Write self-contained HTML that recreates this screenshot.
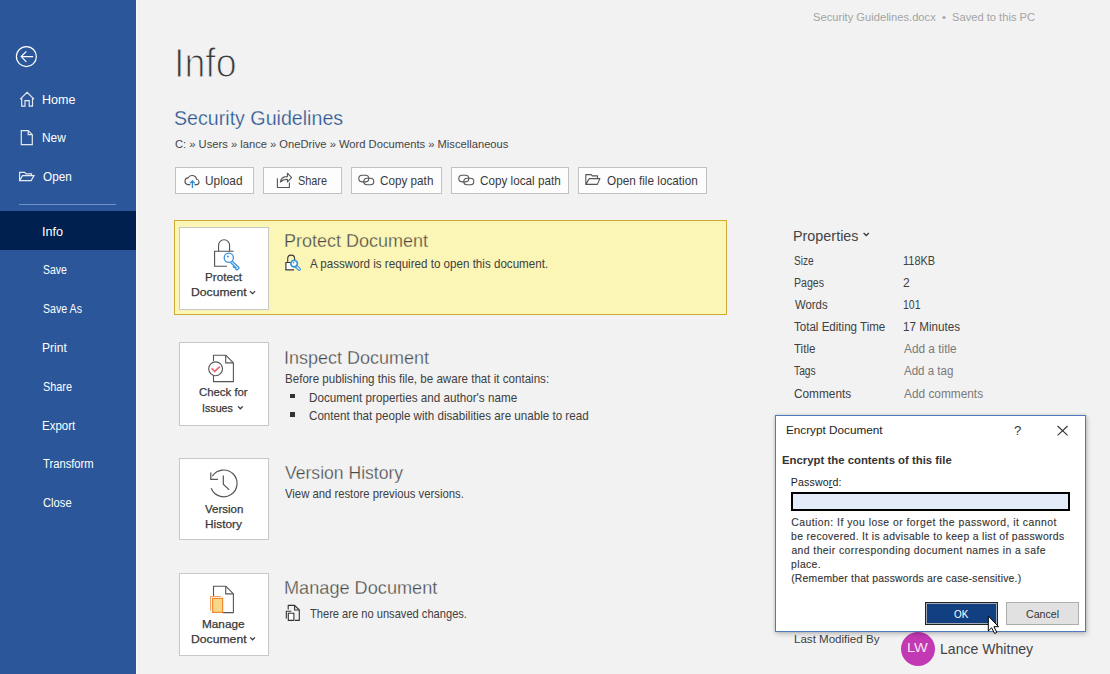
<!DOCTYPE html>
<html><head><meta charset="utf-8"><style>
html,body{margin:0;padding:0}
body{width:1110px;height:674px;position:relative;overflow:hidden;background:#f2f2f2;font-family:"Liberation Sans",sans-serif}
.t{position:absolute;line-height:1;white-space:nowrap;transform-origin:0 0}
</style></head><body>
<div style="position:absolute;left:0px;top:0px;width:136px;height:674px;box-sizing:border-box;background:#2b579a"></div>
<div style="position:absolute;left:136px;top:0px;width:1px;height:674px;box-sizing:border-box;background:#f8f8f8"></div>
<div style="position:absolute;left:0px;top:211px;width:136px;height:39px;box-sizing:border-box;background:#00204f"></div>
<div style="position:absolute;left:19px;top:203.5px;width:97px;height:1px;box-sizing:border-box;background:#6f93c9"></div>
<div class="t" style="top:93.84px;font-size:12px;color:#ffffff;left:42.20px;transform:scaleX(1.0433);">Home</div>
<div class="t" style="top:132.04px;font-size:12px;color:#ffffff;left:42.25px;transform:scaleX(0.9913);">New</div>
<div class="t" style="top:170.84px;font-size:12px;color:#ffffff;left:42.67px;transform:scaleX(0.9779);">Open</div>
<div class="t" style="top:225.84px;font-size:12px;color:#ffffff;left:42.06px;transform:scaleX(1.0532);">Info</div>
<div class="t" style="top:264.24px;font-size:12px;color:#ffffff;left:42.73px;transform:scaleX(0.8752);">Save</div>
<div class="t" style="top:303.44px;font-size:12px;color:#ffffff;left:42.72px;transform:scaleX(0.8844);">Save As</div>
<div class="t" style="top:342.24px;font-size:12px;color:#ffffff;left:42.24px;transform:scaleX(1.0025);">Print</div>
<div class="t" style="top:380.94px;font-size:12px;color:#ffffff;left:42.71px;transform:scaleX(0.9061);">Share</div>
<div class="t" style="top:420.04px;font-size:12px;color:#ffffff;left:42.28px;transform:scaleX(0.9583);">Export</div>
<div class="t" style="top:458.44px;font-size:12px;color:#ffffff;left:42.98px;transform:scaleX(0.9339);">Transform</div>
<div class="t" style="top:497.34px;font-size:12px;color:#ffffff;left:42.64px;transform:scaleX(0.9350);">Close</div>
<svg style="position:absolute;left:0;top:0" width="136" height="200" viewBox="0 0 136 200" fill="none" stroke="#fff" stroke-width="1.2">
<circle cx="26.4" cy="56.6" r="10"/>
<path d="M21.4 56.6 H33.2 M26.4 51.4 L21.2 56.6 L26.4 61.8"/>
<path d="M20.2 99.2 L27.1 92.3 L34 99.2 M21.7 97.8 V106.2 H25 V100.6 H29.2 V106.2 H32.5 V97.8" stroke="#e6e9f0" />
<path d="M21.3 130.6 H28.2 L32.3 134.7 V144.6 H21.3 Z M28.2 130.6 V134.7 H32.3" stroke="#e6e9f0"/>
<path d="M19.6 180.6 V172.3 H24.6 L26 173.8 H31.5 V175.6 M19.6 180.6 L22.5 175.6 H34 L31.1 180.6 Z" stroke="#e6e9f0"/>
</svg>
<div class="t" style="top:42.99px;font-size:41px;color:#3a3a3a;left:173.72px;transform:scaleX(0.9168);-webkit-text-stroke:1.2px #f2f2f2;">Info</div>
<div class="t" style="top:108.74px;font-size:19.8px;color:#2a5590;left:174.42px;transform:scaleX(0.9923);-webkit-text-stroke:0.25px #f2f2f2;">Security Guidelines</div>
<div class="t" style="top:137.80px;font-size:11.7px;color:#444;left:174.64px;transform:scaleX(0.9563);">C: » Users » lance » OneDrive » Word Documents » Miscellaneous</div>
<div style="position:absolute;left:175px;top:167px;width:79px;height:27px;box-sizing:border-box;border:1px solid #c2c2c2;background:#fdfdfd"></div>
<div class="t" style="top:176.03px;font-size:11.9px;color:#3a3a3a;left:205.21px;transform:scaleX(0.9956);">Upload</div>
<div style="position:absolute;left:263px;top:167px;width:79px;height:27px;box-sizing:border-box;border:1px solid #c2c2c2;background:#fdfdfd"></div>
<div class="t" style="top:176.03px;font-size:11.9px;color:#3a3a3a;left:298.41px;transform:scaleX(0.9138);">Share</div>
<div style="position:absolute;left:351px;top:167px;width:91px;height:27px;box-sizing:border-box;border:1px solid #c2c2c2;background:#fdfdfd"></div>
<div class="t" style="top:176.03px;font-size:11.9px;color:#3a3a3a;left:380.41px;transform:scaleX(0.9850);">Copy path</div>
<div style="position:absolute;left:451px;top:167px;width:118px;height:27px;box-sizing:border-box;border:1px solid #c2c2c2;background:#fdfdfd"></div>
<div class="t" style="top:176.03px;font-size:11.9px;color:#3a3a3a;left:479.81px;transform:scaleX(0.9848);">Copy local path</div>
<div style="position:absolute;left:578px;top:167px;width:129px;height:27px;box-sizing:border-box;border:1px solid #c2c2c2;background:#fdfdfd"></div>
<div class="t" style="top:176.03px;font-size:11.9px;color:#3a3a3a;left:607.27px;transform:scaleX(0.9877);">Open file location</div>
<div style="position:absolute;left:174px;top:220px;width:553px;height:95px;box-sizing:border-box;border:1px solid #cfab34;background:#fbf5b6"></div>
<div style="position:absolute;left:179px;top:227px;width:89.5px;height:83px;box-sizing:border-box;border:1px solid #c8c8c8;background:#fff"></div>
<div style="position:absolute;left:179px;top:342px;width:89.5px;height:83.5px;box-sizing:border-box;border:1px solid #c8c8c8;background:#fff"></div>
<div style="position:absolute;left:179px;top:457.7px;width:89.5px;height:82.80000000000001px;box-sizing:border-box;border:1px solid #c8c8c8;background:#fff"></div>
<div style="position:absolute;left:179px;top:572.7px;width:89.5px;height:83.5px;box-sizing:border-box;border:1px solid #c8c8c8;background:#fff"></div>
<div class="t" style="top:271.38px;font-size:11.6px;color:#383838;left:205.06px;transform:scaleX(1.0076);-webkit-text-stroke:0.25px #383838;">Protect</div>
<div class="t" style="top:285.58px;font-size:11.6px;color:#383838;left:190.72px;transform:scaleX(1.0511);-webkit-text-stroke:0.25px #383838;">Document</div>
<div class="t" style="top:386.18px;font-size:11.6px;color:#383838;left:199.23px;transform:scaleX(0.9808);-webkit-text-stroke:0.25px #383838;">Check for</div>
<div class="t" style="top:401.88px;font-size:11.6px;color:#383838;left:202.44px;transform:scaleX(0.9197);-webkit-text-stroke:0.25px #383838;">Issues</div>
<div class="t" style="top:502.88px;font-size:11.6px;color:#383838;left:204.74px;transform:scaleX(0.9901);-webkit-text-stroke:0.25px #383838;">Version</div>
<div class="t" style="top:517.88px;font-size:11.6px;color:#383838;left:205.35px;transform:scaleX(1.0242);-webkit-text-stroke:0.25px #383838;">History</div>
<div class="t" style="top:617.78px;font-size:11.6px;color:#383838;left:202.06px;transform:scaleX(1.0152);-webkit-text-stroke:0.25px #383838;">Manage</div>
<div class="t" style="top:632.68px;font-size:11.6px;color:#383838;left:190.82px;transform:scaleX(1.0511);-webkit-text-stroke:0.25px #383838;">Document</div>
<div class="t" style="top:232.92px;font-size:17.7px;color:#484848;left:284.46px;transform:scaleX(1.0179);-webkit-text-stroke:0.3px #fbf5b6;">Protect Document</div>
<div class="t" style="top:258.26px;font-size:12.1px;color:#404040;left:309.50px;transform:scaleX(0.9600);">A password is required to open this document.</div>
<div class="t" style="top:349.62px;font-size:17.7px;color:#484848;left:283.88px;transform:scaleX(1.0171);-webkit-text-stroke:0.3px #f2f2f2;">Inspect Document</div>
<div class="t" style="top:373.16px;font-size:12.1px;color:#404040;left:284.57px;transform:scaleX(0.9583);">Before publishing this file, be aware that it contains:</div>
<div class="t" style="top:392.16px;font-size:12.1px;color:#404040;left:309.06px;transform:scaleX(0.9664);">Document properties and author's name</div>
<div class="t" style="top:409.56px;font-size:12.1px;color:#404040;left:309.42px;transform:scaleX(0.9605);">Content that people with disabilities are unable to read</div>
<div style="position:absolute;left:290px;top:393.8px;width:4.8px;height:4.6px;box-sizing:border-box;background:#333"></div>
<div style="position:absolute;left:290px;top:412.1px;width:4.8px;height:4.6px;box-sizing:border-box;background:#333"></div>
<div class="t" style="top:464.62px;font-size:17.7px;color:#484848;left:285.41px;transform:scaleX(0.9929);-webkit-text-stroke:0.3px #f2f2f2;">Version History</div>
<div class="t" style="top:488.16px;font-size:12.1px;color:#404040;left:285.44px;transform:scaleX(0.9344);">View and restore previous versions.</div>
<div class="t" style="top:579.82px;font-size:17.7px;color:#484848;left:284.05px;transform:scaleX(1.0259);-webkit-text-stroke:0.3px #f2f2f2;">Manage Document</div>
<div class="t" style="top:607.76px;font-size:12.1px;color:#404040;left:310.38px;transform:scaleX(0.9191);">There are no unsaved changes.</div>
<svg style="position:absolute;left:0;top:0" width="1110" height="674" viewBox="0 0 1110 674" fill="none">
<g stroke="#555" stroke-width="1.1">
<path d="M190.3 184.6 H187.6 A3.4 3.4 0 0 1 188 177.9 A4.6 4.6 0 0 1 196.6 179.3 A2.7 2.7 0 0 1 197 184.6 H194.5"/>
<path d="M277.4 178.2 V187.5 H289.4 V182.5"/>
<path d="M280.3 182 C281 178.5 284 176.5 287.4 176.6 V173.2 L291.6 177.6 L287.4 181.8 V179.3 C284.5 179.3 282 180.3 280.3 182 Z" stroke-linejoin="round"/>
<rect x="358.8" y="175.3" width="10" height="6.6" rx="3.3"/>
<rect x="363.8" y="178.2" width="10" height="6.6" rx="3.3"/>
<rect x="458.8" y="175.3" width="10" height="6.6" rx="3.3"/>
<rect x="463.8" y="178.2" width="10" height="6.6" rx="3.3"/>
<path d="M597.5 178.4 V175.9 H592.3 L591.2 174.6 H585.8 V184.4 H597.4 L599.9 178.6 H589.3 L585.8 184.4" stroke-linejoin="round"/>
</g>
<path d="M192.4 188 V181 M190.1 183.2 L192.4 180.9 L194.7 183.2" stroke="#2b88d8" stroke-width="1.3"/>
<!-- protect lock -->
<g stroke="#505050" stroke-width="1.1">
<path d="M218.6 251.3 V245.2 A5.5 5.5 0 0 1 229.6 245.2 V251.3"/>
<path d="M233.6 251.3 H214.6 V266.3 H227"/>
</g>
<g stroke="#3b94dc" stroke-width="1.3" stroke-linejoin="round">
<path d="M232.2 261.2 L238.7 267.3 Q239.4 268.1 238.6 268.8 L237.7 269.6 Q237 270.2 236.3 269.5 L235.4 268.6 L236.1 267.8 L235 266.8 L234.3 267.5 L233.3 266.5 L234 265.7 L230.5 262.5" fill="#fff"/>
<circle cx="228.8" cy="257.7" r="4.6" fill="#fff"/>
</g>
<circle cx="227.9" cy="256.4" r="1" fill="#3b94dc"/>
<!-- check for issues -->
<g stroke="#555" stroke-width="1.1" stroke-linejoin="round">
<path d="M213.5 361 V355.2 H225.7 L233.4 362.9 V381.6 H213.5 V376" fill="#fff"/>
<path d="M225.7 355.2 V362.9 H233.4"/>
<circle cx="215.6" cy="368.8" r="6.9" fill="#fff"/>
</g>
<path d="M211.6 368.4 L214.7 371.4 L219.8 366.6" stroke="#e8646a" stroke-width="1.5"/>
<!-- version history -->
<g stroke="#555" stroke-width="1.2">
<path d="M212.3 476.3 A13.4 13.4 0 1 1 211.2 488.3"/>
<path d="M210.8 472.4 V479.3 H217.9"/>
<path d="M223.3 475.4 V484.3 L229.2 489.9"/>
</g>
<!-- manage document -->
<g stroke="#555" stroke-width="1.1" stroke-linejoin="round">
<path d="M213.5 597 V586.2 H225.7 L233.4 593.9 V612.6 H222.5" fill="#fff"/>
<path d="M225.7 586.2 V593.9 H233.4"/>
</g>
<path d="M210.6 610.8 V596.5 H220.9" stroke="#f3a46a" stroke-width="1.1"/>
<rect x="212.6" y="598.4" width="10" height="14" fill="#f8d888" stroke="#ef8a30" stroke-width="1.2"/>
<!-- small lock -->
<path d="M287.7 262.4 V258.6 A3.45 3.45 0 0 1 294.6 258.6 V260" stroke="#3a3a3a" stroke-width="1.1"/>
<path d="M291.5 262.5 H285.9 V269.9 H294" stroke="#3a3a3a" stroke-width="1.2" fill="#fff"/>
<path d="M296.2 266.4 L299.3 269.2" stroke="#3b94dc" stroke-width="3.4" stroke-linecap="round"/>
<path d="M296.2 266.4 L299.3 269.2" stroke="#fff" stroke-width="1.1" stroke-linecap="round"/>
<circle cx="294.1" cy="263.6" r="3.3" stroke="#3b94dc" stroke-width="1.7" fill="#fff"/>
<circle cx="293.4" cy="262.8" r="0.8" fill="#3b94dc"/>
<!-- small manage icon -->
<g stroke="#333" stroke-width="1.1" stroke-linejoin="round">
<path d="M288.2 609.6 V605.4 H294.6 L299.3 610 V620.4 H295"/>
<path d="M294.6 605.4 V610 H299.3"/>
<path d="M286.3 618.5 V611.3 H291.3"/>
<rect x="288.3" y="613.2" width="5.6" height="7.2" fill="#fff"/>
</g>
<!-- chevrons -->
<g stroke="#3a3a3a" stroke-width="1.3">
<path d="M863.6 233.1 L866.2 235.5 L868.8 233.1"/>
<path d="M249.9 291.1 L252.5 293.6 L255.1 291.1"/>
<path d="M238 406.4 L240.4 408.8 L242.8 406.4"/>
<path d="M250.2 637.4 L252.6 639.8 L255 637.4"/>
</g>
</svg>
<div class="t" style="top:10.90px;font-size:11.7px;color:#a4a4a4;left:813.10px;transform:scaleX(0.9540);">Security Guidelines.docx&nbsp; •&nbsp; Saved to this PC</div>
<div class="t" style="top:228.50px;font-size:14.3px;color:#444;left:793.45px;transform:scaleX(1.0053);">Properties</div>
<div class="t" style="top:255.19px;font-size:12.3px;color:#404040;left:794.15px;transform:scaleX(0.8196);">Size</div>
<div class="t" style="top:255.19px;font-size:12.3px;color:#404040;left:902.98px;transform:scaleX(0.8914);">118KB</div>
<div class="t" style="top:276.59px;font-size:12.3px;color:#404040;left:793.75px;transform:scaleX(0.8608);">Pages</div>
<div class="t" style="top:276.59px;font-size:12.3px;color:#404040;left:903.20px;transform:scaleX(0.9828);">2</div>
<div class="t" style="top:298.79px;font-size:12.3px;color:#404040;left:794.54px;transform:scaleX(0.9222);">Words</div>
<div class="t" style="top:298.79px;font-size:12.3px;color:#404040;left:903.01px;transform:scaleX(0.8525);">101</div>
<div class="t" style="top:320.69px;font-size:12.3px;color:#404040;left:794.37px;transform:scaleX(0.9403);">Total Editing Time</div>
<div class="t" style="top:320.69px;font-size:12.3px;color:#404040;left:902.93px;transform:scaleX(0.9474);">17 Minutes</div>
<div class="t" style="top:343.19px;font-size:12.3px;color:#404040;left:794.37px;transform:scaleX(0.9383);">Title</div>
<div class="t" style="top:343.19px;font-size:12.3px;color:#7a7a7a;left:903.80px;transform:scaleX(0.9627);">Add a title</div>
<div class="t" style="top:365.39px;font-size:12.3px;color:#404040;left:794.39px;transform:scaleX(0.8348);">Tags</div>
<div class="t" style="top:365.39px;font-size:12.3px;color:#7a7a7a;left:903.80px;transform:scaleX(0.9374);">Add a tag</div>
<div class="t" style="top:387.89px;font-size:12.3px;color:#404040;left:794.01px;transform:scaleX(0.9619);">Comments</div>
<div class="t" style="top:387.89px;font-size:12.3px;color:#7a7a7a;left:903.80px;transform:scaleX(0.9643);">Add comments</div>
<div class="t" style="top:633.20px;font-size:11.7px;color:#404040;left:793.67px;transform:scaleX(0.9885);">Last Modified By</div>
<div style="position:absolute;left:901px;top:632px;width:34px;height:34px;border-radius:50%;background:#c239b3"></div>
<div class="t" style="top:641.37px;font-size:13.5px;color:#f7e3f4;left:906.54px;transform:scaleX(1.0779);">LW</div>
<div class="t" style="top:641.90px;font-size:14.3px;color:#444;left:939.87px;transform:scaleX(0.9845);">Lance Whitney</div>
<div style="position:absolute;left:775px;top:415px;width:311px;height:217px;box-sizing:border-box;border:1px solid #4d7bbb;background:#fff;box-shadow:1px 2px 5px rgba(0,0,0,0.22),0 0 3px rgba(0,0,0,0.12)"></div>
<div class="t" style="top:425.01px;font-size:11.8px;color:#222;left:785.66px;transform:scaleX(0.9943);">Encrypt Document</div>
<div class="t" style="top:424.82px;font-size:12.5px;color:#333;left:1014.18px;transform:scaleX(1.0500);">?</div>
<svg style="position:absolute;left:1056px;top:425px" width="13" height="12" viewBox="0 0 13 12"><path d="M1.6 1 L11.6 10.4 M11.6 1 L1.6 10.4" stroke="#333" stroke-width="1.1"/></svg>
<div class="t" style="top:454.77px;font-size:11.5px;color:#333;font-weight:bold;left:782.26px;transform:scaleX(0.9876);">Encrypt the contents of this file</div>
<div class="t" style="top:476.83px;font-size:10.6px;color:#222;left:790.75px;letter-spacing:0.169px;">Passwo<u>r</u>d:</div>
<div style="position:absolute;left:791px;top:492px;width:279px;height:19px;box-sizing:border-box;border:2px solid #000;background:#e3ecf8"></div>
<div class="t" style="top:518.00px;font-size:10.4px;color:#333;left:791.28px;letter-spacing:0.468px;-webkit-text-stroke:0.12px #333;">Caution: If you lose or forget the password, it cannot</div>
<div class="t" style="top:531.90px;font-size:10.4px;color:#333;left:791.12px;letter-spacing:0.327px;-webkit-text-stroke:0.12px #333;">be recovered. It is advisable to keep a list of passwords</div>
<div class="t" style="top:545.90px;font-size:10.4px;color:#333;left:791.38px;letter-spacing:0.430px;-webkit-text-stroke:0.12px #333;">and their corresponding document names in a safe</div>
<div class="t" style="top:559.50px;font-size:10.4px;color:#333;left:791.12px;letter-spacing:0.359px;-webkit-text-stroke:0.12px #333;">place.</div>
<div class="t" style="top:573.80px;font-size:10.4px;color:#333;left:791.18px;letter-spacing:0.213px;-webkit-text-stroke:0.12px #333;">(Remember that passwords are case-sensitive.)</div>
<div style="position:absolute;left:925px;top:602px;width:73px;height:23px;box-sizing:border-box;border:1px solid #222;background:#123f7f;box-shadow:inset 0 0 0 1px #a3aab5"></div>
<div class="t" style="top:608.20px;font-size:11.7px;color:#fff;left:954.05px;transform:scaleX(0.8486);">OK</div>
<div style="position:absolute;left:1006px;top:602px;width:73px;height:23px;box-sizing:border-box;border:1px solid #adadad;background:#e1e1e1"></div>
<div class="t" style="top:608.20px;font-size:11.7px;color:#333;left:1025.77px;transform:scaleX(0.9103);">Cancel</div>
<svg style="position:absolute;left:980px;top:610px" width="30" height="30" viewBox="980 610 30 30"><path d="M988.3 616 V631 L991.6 627.8 L994.6 633.5 L996.8 632.4 L993.9 626.7 H998.6 Z" fill="#fff" stroke="#000" stroke-width="1" stroke-linejoin="round"/></svg>
</body></html>
